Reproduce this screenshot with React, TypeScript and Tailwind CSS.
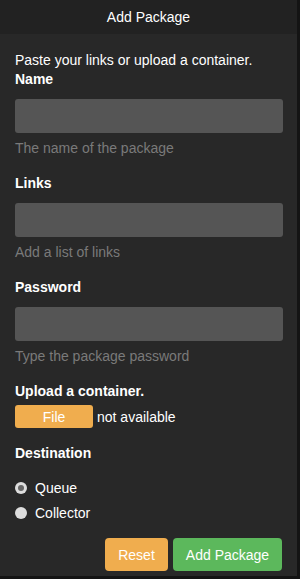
export default function App() {
  const font = { fontFamily: '"Liberation Sans", Arial, sans-serif' };
  return (
    <div className="w-[300px] h-[579px] bg-[#141414] overflow-hidden" style={font}>
      <div className="w-[297px] h-[576px] bg-[#282828] flex flex-col">
        <div className="h-[34px] bg-[#222222] flex items-center justify-center text-[14px] text-white">
          Add Package
        </div>
        <div className="flex flex-col px-[15px] pt-[16px] text-[14px] leading-[20px] text-white">
          <p>Paste your links or upload a container.</p>
          <label className="font-bold mt-[-1px]">Name</label>
          <div className="mt-[10px] h-[34px] w-[268px] rounded-[3px] bg-[#555555]" />
          <p className="mt-[5px] text-[#7a7a7a]">The name of the package</p>
          <label className="font-bold mt-[15px]">Links</label>
          <div className="mt-[10px] h-[34px] w-[268px] rounded-[3px] bg-[#555555]" />
          <p className="mt-[5px] text-[#7a7a7a]">Add a list of links</p>
          <label className="font-bold mt-[15px]">Password</label>
          <div className="mt-[10px] h-[34px] w-[268px] rounded-[3px] bg-[#555555]" />
          <p className="mt-[5px] text-[#7a7a7a]">Type the package password</p>
          <label className="font-bold mt-[15px]">Upload a container.</label>
          <div className="mt-[4px] flex items-center gap-[4px]">
            <div className="w-[78px] h-[23px] rounded-[3px] bg-[#f0ad4e] flex items-center justify-center text-white">File</div>
            <span>not available</span>
          </div>
          <label className="font-bold mt-[15px]">Destination</label>
          <div className="mt-[15px] flex items-center gap-[8px]">
            <span className="w-[12px] h-[12px] rounded-full bg-[#dddddd] flex items-center justify-center">
              <span className="w-[6px] h-[6px] rounded-full bg-[#666666]" />
            </span>
            <span>Queue</span>
          </div>
          <div className="mt-[5px] flex items-center gap-[8px]">
            <span className="w-[12px] h-[12px] rounded-full bg-[#dddddd]" />
            <span>Collector</span>
          </div>
          <div className="mt-[15px] flex justify-end gap-[5px]">
            <button className="h-[33px] w-[63px] rounded-[4px] bg-[#f0ad4e] text-white">Reset</button>
            <button className="h-[33px] w-[109px] rounded-[4px] bg-[#5cb85c] text-white">Add Package</button>
          </div>
        </div>
      </div>
    </div>
  );
}
